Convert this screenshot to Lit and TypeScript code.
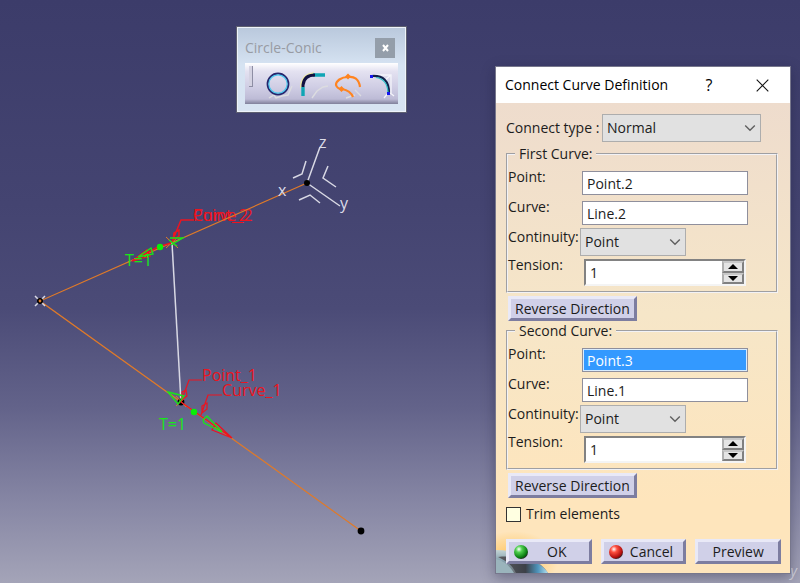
import { LitElement, html, css, svg } from "lit";
import { customElement, property, state } from "lit/decorators.js";

const chevron = html`<svg class="chev" width="12" height="8" viewBox="0 0 12 8" aria-hidden="true">
  <path d="M1.2 1.4 L6 6.2 L10.8 1.4" fill="none" stroke="#606060" stroke-width="1.4" />
</svg>`;

const controls = css`
  *, *::before, *::after { box-sizing: border-box; }
  input, select, button {
    font: inherit;
    color: inherit;
    margin: 0;
    border-radius: 0;
    outline: none;
  }
  .drop { position: relative; display: block; }
  .drop select {
    appearance: none;
    display: block;
    width: 100%;
    height: 28px;
    padding: 0 20px 0 4px;
    border: 1px solid #adadad;
    background: #e1e1e1;
  }
  .chev { position: absolute; right: 5px; top: 10px; pointer-events: none; }
  .push {
    display: flex;
    align-items: center;
    height: 25px;
    padding: 0 8px;
    border: 3px solid;
    border-color: #e9e9f7 #7d7da0 #7d7da0 #e9e9f7;
    background: #d0d0e8;
    line-height: 19px;
    white-space: nowrap;
  }
`;

@customElement("curve-group")
class CurveGroup extends LitElement {
  @property() heading = "";
  @property() point = "";
  @property() curve = "";
  @property({ type: Boolean }) active = false;
  @state() tension = 1;

  static styles = [controls, css`
    :host { display: block; }
    fieldset {
      min-width: 0;
      margin: 0;
      padding: 5px 0;
      border: 2px groove #f2f2f6;
    }
    legend {
      margin-left: 7px;
      padding: 0 4px;
      line-height: 16px;
    }
    .row {
      display: grid;
      grid-template-columns: 72px 1fr;
      height: 30px;
      align-items: start;
      line-height: 20px;
      white-space: nowrap;
    }
    .row.short { height: 28px; }
    .row.last { height: 31px; }
    .text {
      width: auto;
      min-width: 0;
      height: 24px;
      margin: 4px 28px 0 2px;
      padding: 0 4px;
      border: 1px solid #8f8f9c;
      background: #fff;
    }
    .text.active {
      color: #fff;
      background: #3399ff;
      box-shadow: inset 0 0 0 1px #d8ecff;
    }
    .drop { width: 106px; margin-top: 1px; }
    .spin {
      display: grid;
      grid-template-columns: 1fr 22px;
      height: 27px;
      margin: 4px 30px 0 4px;
      border: 2px solid;
      border-color: #828282 #f4f4f4 #f4f4f4 #828282;
      background: #fff;
    }
    .spin input {
      appearance: textfield;
      width: 100%;
      min-width: 0;
      border: 0;
      padding: 0 4px;
      background: none;
    }
    .spin input::-webkit-inner-spin-button { appearance: none; }
    .arrows { display: grid; grid-template-rows: 1fr 1fr; }
    .arrows button {
      display: flex;
      align-items: center;
      justify-content: center;
      padding: 0;
      border: 2px solid;
      border-color: #c8c8c8 #808080 #808080 #b0b0b0;
      background: #e4e4e4;
      min-height: 0;
    }
    .arrows svg { flex: none; }
    .push { margin: 3px 0 0 2px; padding: 0 4px; }
  `];

  render() {
    return html`
      <fieldset>
        <legend>${this.heading}</legend>
        <div class="row">
          <label for="point">Point:</label>
          <input id="point" class="text ${this.active ? "active" : ""}" .value=${this.point} />
        </div>
        <div class="row">
          <label for="curve">Curve:</label>
          <input id="curve" class="text" .value=${this.curve} />
        </div>
        <div class="row short">
          <label for="cont">Continuity:</label>
          <span class="drop">
            <select id="cont"><option>Point</option><option>Tangency</option><option>Curvature</option></select>
            ${chevron}
          </span>
        </div>
        <div class="row last">
          <label for="tension">Tension:</label>
          <div class="spin">
            <input id="tension" type="number" .value=${String(this.tension)} />
            <div class="arrows">
              <button aria-label="Increase tension" @click=${() => this.tension++}>
                <svg width="10" height="5" viewBox="0 0 10 5"><path d="M5 0L10 5H0z" /></svg>
              </button>
              <button aria-label="Decrease tension" @click=${() => this.tension--}>
                <svg width="10" height="5" viewBox="0 0 10 5"><path d="M0 0H10L5 5z" /></svg>
              </button>
            </div>
          </div>
        </div>
      </fieldset>
      <button class="push">Reverse Direction</button>
    `;
  }
}

@customElement("curve-dialog")
class CurveDialog extends LitElement {
  static styles = [controls, css`
    :host {
      display: block;
      box-sizing: border-box;
      border: 1px solid #77778c;
      box-shadow: 0 4px 12px rgba(20, 20, 50, 0.35);
      font: 14px/20px "Open Sans", "Noto Sans", sans-serif;
      color: #1c1c1c;
    }
    header {
      display: flex;
      align-items: center;
      height: 36px;
      padding: 0 20px 0 9px;
      background: #fff;
      color: #000;
    }
    h1 { flex: 1; margin: 0; font: inherit; white-space: nowrap; }
    header button {
      padding: 0;
      border: 0;
      background: none;
      width: 16px;
      height: 20px;
      display: flex;
      align-items: center;
      justify-content: center;
    }
    header .help { margin-right: 37px; font-size: 16px; }
    .body {
      position: relative;
      padding: 11px 12px 9px 10px;
      background: linear-gradient(#eedccd, #f6e6c8 45%, #fee5bc 85%);
    }
    .type {
      display: grid;
      grid-template-columns: 96px 159px;
      align-items: center;
      white-space: nowrap;
      margin-bottom: 4px;
    }
    curve-group + curve-group { margin-top: 2px; }
    .trim { display: flex; align-items: center; gap: 5px; margin-top: 6px; }
    .trim input {
      appearance: none;
      width: 15px;
      height: 15px;
      border: 1px solid #333;
      background: #ffffe1;
    }
    .actions {
      position: relative;
      display: grid;
      grid-template-columns: repeat(3, 1fr);
      gap: 9px;
      margin-top: 15px;
      margin-right: -3px;
    }
    .actions .push { padding: 0 4px; }
    .actions span { flex: 1; text-align: center; }
    .art { position: absolute; left: 0; bottom: 0; }
  `];

  private ball(kind: string, light: string, dark: string) {
    return html`<svg width="16" height="16" viewBox="0 0 16 16" aria-hidden="true">
      <defs><radialGradient id=${kind} cx=".35" cy=".3" r=".75">
        <stop offset="0" stop-color="#fff" /><stop offset=".3" stop-color=${light} />
        <stop offset=".8" stop-color=${dark} /><stop offset="1" stop-color="#222" />
      </radialGradient></defs>
      <circle cx="8" cy="8" r="7" fill="url(#${kind})" />
    </svg>`;
  }

  render() {
    return html`
      <header>
        <h1>Connect Curve Definition</h1>
        <button class="help" aria-label="Help">?</button>
        <button aria-label="Close"><svg width="13" height="13" viewBox="0 0 13 13">
          <path d="M.7 .7L12.3 12.3M12.3 .7L.7 12.3" stroke="#111" stroke-width="1.1" /></svg></button>
      </header>
      <div class="body">
        <svg class="art" width="70" height="44" viewBox="0 0 70 44" aria-hidden="true">
          <defs>
            <radialGradient id="glow"><stop offset=".3" stop-color="#ffcb70" /><stop offset="1" stop-color="#ffcb70" stop-opacity="0" /></radialGradient>
            <linearGradient id="earth" x1="0" y1="0" x2="0" y2="1">
              <stop offset="0" stop-color="#c4d4d4" /><stop offset=".45" stop-color="#88a4b0" />
              <stop offset="1" stop-color="#6a7076" />
            </linearGradient>
            <linearGradient id="rim" x1="0" y1="0" x2="1" y2="0">
              <stop offset="0" stop-color="#5c5c60" /><stop offset=".55" stop-color="#3c4048" />
              <stop offset=".8" stop-color="#4e94bc" /><stop offset="1" stop-color="#b4e0ee" />
            </linearGradient>
          </defs>
          <ellipse cx="18" cy="32" rx="44" ry="30" fill="url(#glow)" />
          <path d="M0 21C22 21 44 30 52 44H0z" fill="url(#earth)" />
          <path d="M2 28C20 26 44 31 52 44H20C16 36 10 32 2 28z" fill="url(#rim)" />
          <path d="M0 30C8 32 14 37 18 44H0z" fill="#9ab4bc" />
        </svg>
        <div class="type">
          <label for="type">Connect type :</label>
          <span class="drop">
            <select id="type"><option>Normal</option><option>Base Curve</option></select>
            ${chevron}
          </span>
        </div>
        <curve-group heading="First Curve:" point="Point.2" curve="Line.2"></curve-group>
        <curve-group heading="Second Curve:" point="Point.3" curve="Line.1" active></curve-group>
        <div class="trim"><input type="checkbox" id="trim" /><label for="trim">Trim elements</label></div>
        <div class="actions">
          <button class="push">${this.ball("ok", "#4fd04f", "#087a10")}<span>OK</span></button>
          <button class="push">${this.ball("no", "#ff5040", "#b00c0c")}<span>Cancel</span></button>
          <button class="push"><span>Preview</span></button>
        </div>
      </div>
    `;
  }
}

@customElement("tool-palette")
class ToolPalette extends LitElement {
  static styles = css`
    :host {
      display: block;
      box-sizing: border-box;
      padding: 6px 8px 8px 8px;
      border: 1px solid #5e6070;
      box-shadow: inset 0 0 0 1px #eef3fa;
      background: linear-gradient(#b9c8dc, #d6e3f2 45%, #d8e4f2);
      font: 14px/20px "Open Sans", "Noto Sans", sans-serif;
    }
    header { display: flex; align-items: center; justify-content: space-between; height: 30px; padding-right: 3px; }
    h2 { margin: 0; font: inherit; color: #989ba3; }
    button { padding: 0; border: 0; background: none; display: flex; }
    header button {
      width: 20px;
      height: 20px;
      align-items: center;
      justify-content: center;
      background: #949eaa;
    }
    nav {
      display: flex;
      align-items: center;
      justify-content: space-between;
      height: 41px;
      padding-left: 4px;
      background: linear-gradient(#fff, #e4e2f1 20%, #cfcde4 60%, #bdbbd6 88%, #80809a);
    }
    .grip {
      align-self: flex-start;
      width: 3px;
      height: 20px;
      margin: 3px 6px 0 0;
      background: #d4d2e2;
      border-right: 1px solid #8e8ea4;
      border-bottom: 1px solid #8e8ea4;
    }
  `;

  render() {
    return html`
      <header>
        <h2>Circle-Conic</h2>
        <button aria-label="Close"><svg width="7" height="8" viewBox="0 0 7 8"><path d="M1 1L6 7M6 1L1 7" stroke="#fff" stroke-width="2" /></svg></button>
      </header>
      <nav>
        <span class="grip"></span>
        <button aria-label="Circle"><svg width="30" height="32" viewBox="0 0 30 32">
          <path d="M5 30L10 27L12 30L18 28L24 27L28 18" fill="none" stroke="#dcdce0" stroke-width="1.4" />
          <circle cx="14" cy="16" r="10.400" fill="none" stroke="#26266c" stroke-width="2" />
          <circle cx="14" cy="16" r="9.200" fill="none" stroke="#4cc8ee" stroke-width="1.2" />
        </svg></button>
        <button aria-label="Corner"><svg width="30" height="32" viewBox="0 0 30 32">
          <path d="M13 30L18 23L24 19L29 18" fill="none" stroke="#dcdce0" stroke-width="1.4" />
          <path d="M2 20V16Q4 6 15 5" fill="none" stroke="#eeeaa4" stroke-width="1.6" />
          <path d="M4 28V19M14 7H26" fill="none" stroke="#0fa5b5" stroke-width="3.4" />
          <path d="M4 19V17Q5 7 16 7" fill="none" stroke="#101040" stroke-width="3" />
        </svg></button>
        <button aria-label="Connect curve"><svg width="30" height="32" viewBox="0 0 30 32">
          <path d="M13 30L22 27M22 22L28 28" fill="none" stroke="#dcdce0" stroke-width="1.4" />
          <path d="M27 19C26 11 21 8 15 9C8 9 3 13 3 17C4 20 6 21 9 21C14 22 18 24 20 29" fill="none" stroke="#ff8420" stroke-width="2.2" />
          <path d="M15 5.500L18 8.500L15 11.500L12 8.500zM8.500 18L11.500 21L8.500 24L5.500 21z" fill="#ff8420" />
        </svg></button>
        <button aria-label="Conic"><svg width="30" height="32" viewBox="0 0 30 32">
          <path d="M5 7H23V25M16 13L23 7M16 30L21 24L26 28" fill="none" stroke="#f4f4fa" stroke-width="1.3" />
          <path d="M4 8Q21 7 21 25" fill="none" stroke="#10204a" stroke-width="2.2" />
          <path d="M8 9.500Q19 11 20 24" fill="none" stroke="#30c0c8" stroke-width="1.2" />
          <path d="M2 7h3v3H2zM19 24h3v3h-3z" fill="#1414ee" />
        </svg></button>
      </nav>
    `;
  }
}

@customElement("app-root")
class AppRoot extends LitElement {
  static styles = css`
    :host {
      display: block;
      position: relative;
      min-height: 100vh;
      overflow: hidden;
      background: linear-gradient(#3c3c6a, #444471 35%, #4b4b77 53%, #63638a 70%, #8686a4 86%, #a4a4b8);
    }
    .scene { position: absolute; left: 0; top: 0; overflow: visible; font-family: "Open Sans", "Noto Sans", sans-serif; font-size: 16px; }
    .red { fill: none; stroke: #ec1420; }
    .green { fill: none; stroke: #18e818; }
    .white { fill: none; stroke: #d8d8e4; stroke-width: 1.5; }
    .axis { fill: #dcdce8; }
    .name { fill: #ec1420; }
    .tension { fill: #18e818; }
    .corner { position: absolute; right: 3px; bottom: 2px; color: #d4d4de; font: italic 14px/20px "Open Sans", sans-serif; }
    tool-palette { position: absolute; left: 236px; top: 26px; width: 171px; }
    curve-dialog { position: absolute; right: 9px; top: 66px; width: 296px; }
  `;

  render() {
    return html`
      ${this.scene()}
      <span class="corner">y</span>
      <tool-palette></tool-palette>
      <curve-dialog></curve-dialog>
    `;
  }

  private scene() {
    return html`<svg class="scene" width="800" height="583" viewBox="0 0 800 583">
      <text class="name" x="193" y="221">Point_2</text>
      <text class="name" x="193" y="221">Curve_2</text>
      ${svg`
        <path d="M307 183L40 301L361 531" fill="none" stroke="#e07a28" stroke-width="1.2" />
        <path class="white" d="M172 243L181 402" />
        <path class="white" d="M307 183L320 147M307 183L340 206M293 178L302 174L306 161M328 166L323 178L336 187M299 200L310 195L320 203" />
        <path class="white" d="M35 296L45 306M45 296L35 306" />
        <circle cx="307" cy="183" r="3" /><circle cx="40" cy="301" r="3" />
        <circle cx="181" cy="402" r="3.400" /><circle cx="361" cy="531" r="3.400" />
        <circle cx="40" cy="301" r="1.400" fill="#e07a28" />
        <path d="M166 237L178 248M178 237L166 248M176 396L186 407M186 397L176 406" stroke="#e07a28" />
        <path class="red" d="M172 242L181 220H194M173 240L174 233L179 230L179 236zM171 243L158 247M158 247L132 261L147 250L150 256L132 261" stroke-width="1.500" />
        <path class="green" d="M170 238L183 238L171 245M169 240L177 246M138 257L151 248L153 254z" stroke-width="1.300" />
        <path class="red" d="M181 402L189 380H202M182 400L182 392L186 390L187 396zM201 415L208 395H222M202 413L202 406L207 403L207 409zM181 402L232 438L216 423L212 430L232 438" stroke-width="1.200" />
        <path class="green" d="M168 392L184 396L178 404zM203 420L207 416L222 432L204 423z" stroke-width="1.300" />
        <circle cx="160" cy="247" r="3.200" fill="#08f008" /><circle cx="194" cy="412" r="3.200" fill="#08f008" />
      `}
      <text class="axis" x="319" y="148">z</text>
      <text class="axis" x="278" y="196">x</text>
      <text class="axis" x="340" y="209">y</text>
      <text class="name" x="202" y="381">Point_1</text>
      <text class="name" x="222" y="396">Curve_1</text>
      <text class="tension" x="125" y="266">T=1</text>
      <text class="tension" x="159" y="430">T=1</text>
    </svg>`;
  }
}
